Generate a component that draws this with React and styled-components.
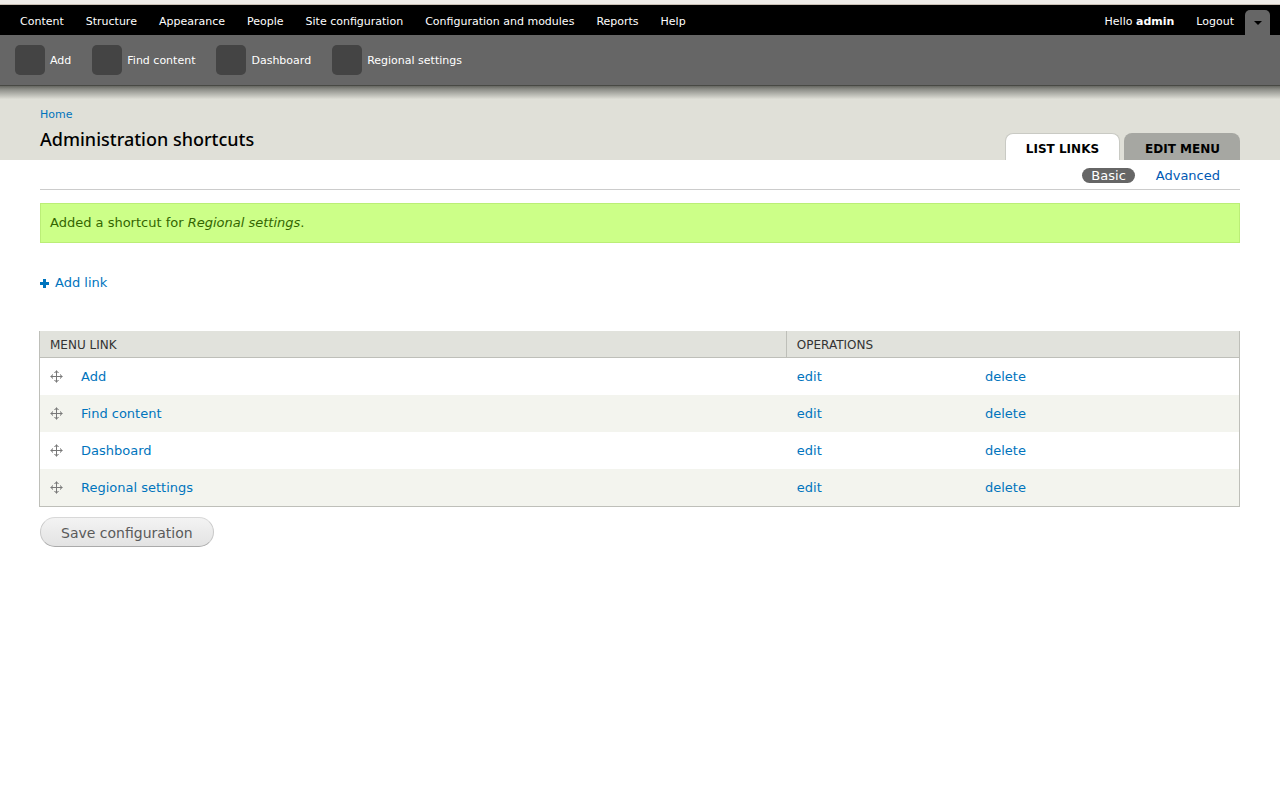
import { useState } from "react";
import styled, { createGlobalStyle } from "styled-components";

const menuItems = [
  "Content",
  "Structure",
  "Appearance",
  "People",
  "Site configuration",
  "Configuration and modules",
  "Reports",
  "Help",
];

const shortcuts = ["Add", "Find content", "Dashboard", "Regional settings"];

const App = () => {
  const [drawerOpen, setDrawerOpen] = useState(true);

  return (
    <>
      <GlobalStyle />
      <Toolbar>
        <MenuBar>
          <Menu>
            {menuItems.map((item) => (
              <MenuLink href="#" key={item}>{item}</MenuLink>
            ))}
          </Menu>
          <UserMenu>
            <MenuLink href="#">Hello <strong>admin</strong></MenuLink>
            <MenuLink href="#">Logout</MenuLink>
          </UserMenu>
          <Toggle
            type="button"
            aria-label="Toggle shortcuts"
            onClick={() => setDrawerOpen(!drawerOpen)}
          >
            <svg width="8" height="4" viewBox="0 0 8 4">
              <path d="M0 0h8L4 4z" fill="#000" />
            </svg>
          </Toggle>
        </MenuBar>
        {drawerOpen && (
          <Drawer>
            {shortcuts.map((name) => (
              <Shortcut href="#" key={name}>
                <ShortcutIcon />
                <ShortcutName>{name}</ShortcutName>
              </Shortcut>
            ))}
          </Drawer>
        )}
      </Toolbar>
      <Shadow />

      <Branding>
        <div>
          <Breadcrumb href="#">Home</Breadcrumb>
          <Title>Administration shortcuts</Title>
        </div>
        <Tabs>
          <Tab href="#" $active>List links</Tab>
          <Tab href="#">Edit menu</Tab>
        </Tabs>
      </Branding>

      <Page>
        <SubTabs>
          <SubTab href="#" $active>Basic</SubTab>
          <SubTab href="#">Advanced</SubTab>
        </SubTabs>

        <Message>
          Added a shortcut for <em>Regional settings</em>.
        </Message>

        <AddLink href="#">
          <svg width="9" height="9" viewBox="0 0 9 9">
            <path d="M3 0h3v3h3v3H6v3H3V6H0V3h3z" fill="#0074bd" />
          </svg>
          Add link
        </AddLink>

        <Table>
          <colgroup>
            <LinkCol />
            <EditCol />
            <col />
          </colgroup>
          <thead>
            <tr>
              <Th>Menu link</Th>
              <Th colSpan="2">Operations</Th>
            </tr>
          </thead>
          <tbody>
            {shortcuts.map((name) => (
              <Row key={name}>
                <Td>
                  <LinkCell>
                    <DragHandle />
                    <Link href="#">{name}</Link>
                  </LinkCell>
                </Td>
                <Td><Link href="#">edit</Link></Td>
                <Td><Link href="#">delete</Link></Td>
              </Row>
            ))}
          </tbody>
        </Table>

        <SaveButton type="button">Save configuration</SaveButton>
      </Page>
    </>
  );
};

const DragHandle = () => (
  <svg width="13" height="13" viewBox="0 0 13 13" fill="#787878">
    <path d="M6 1h1v11H6z" />
    <path d="M1 6h11v1H1z" />
    <path d="M6 0h1v1h1v1h1v1H4V2h1V1h1z" opacity="0.6" />
    <path d="M6 13h1v-1h1v-1h1v-1H4v1h1v1h1z" opacity="0.6" />
    <path d="M0 6v1h1v1h1v1h1V4H2v1H1v1z" opacity="0.6" />
    <path d="M13 6v1h-1v1h-1v1h-1V4h1v1h1v1z" opacity="0.6" />
  </svg>
);

export default App;

const GlobalStyle = createGlobalStyle`
  body {
    margin: 0;
    background: #fff;
    color: #000;
    font-family: "DejaVu Sans", Verdana, sans-serif;
    font-size: 13px;
    line-height: 20px;
  }

  a {
    text-decoration: none;
  }

  svg {
    flex: none;
    display: block;
  }
`;

const Toolbar = styled.header`
  border-top: 4px solid #eeebe7;
  font-size: 11px;
`;

const MenuBar = styled.div`
  display: flex;
  height: 30px;
  padding: 0 10px 0 9px;
  border-top: 1px solid #c9bfb4;
  background: #000;
`;

const Menu = styled.nav`
  display: flex;
  flex: 1;
`;

const UserMenu = styled.nav`
  display: flex;
`;

const MenuLink = styled.a`
  padding: 7px 11px 3px;
  color: #fff;
  white-space: nowrap;
`;

const Toggle = styled.button`
  display: flex;
  align-items: center;
  justify-content: center;
  align-self: flex-end;
  width: 25px;
  height: 25px;
  padding: 0;
  border: none;
  border-radius: 5px 5px 0 0;
  background: #666;
  cursor: pointer;
`;

const Drawer = styled.nav`
  display: flex;
  gap: 21px;
  padding: 10px 15px;
  background: #666;
`;

const Shortcut = styled.a`
  display: flex;
  align-items: center;
  gap: 5px;
  color: #fff;
`;

const ShortcutName = styled.span`
  padding-top: 2px;
`;

const ShortcutIcon = styled.span`
  width: 30px;
  height: 30px;
  border-radius: 5px;
  background: #444;
`;

const Shadow = styled.div`
  height: 13px;
  border-top: 1px solid #484944;
  background: linear-gradient(#666761, #8c8d87 25%, #d8d8d0 95%, #e0e0d8);
`;

const Branding = styled.div`
  display: flex;
  justify-content: space-between;
  align-items: flex-end;
  padding: 6px 40px 0;
  background: #e0e0d8;
`;

const Breadcrumb = styled.a`
  display: block;
  color: #0074bd;
  font-size: 11px;
`;

const Title = styled.h1`
  margin: 0;
  padding: 2px 0 9px;
  font-family: "Noto Sans", "DejaVu Sans", sans-serif;
  font-size: 18px;
  font-weight: 500;
  line-height: 24px;
`;

const Tabs = styled.nav`
  display: flex;
  gap: 4px;
`;

const Tab = styled.a`
  padding: ${(p) => (p.$active ? "5px 20px 1px" : "6px 20px 1px 21px")};
  border: solid #c9cac4;
  border-width: ${(p) => (p.$active ? "1px 1px 0" : "0")};
  border-radius: 8px 8px 0 0;
  background: ${(p) => (p.$active ? "#fff" : "#a6a7a2")};
  color: #000;
  font-size: 12px;
  font-weight: bold;
  text-transform: uppercase;
`;

const Page = styled.main`
  padding: 0 40px 40px;
`;

const SubTabs = styled.nav`
  display: flex;
  justify-content: flex-end;
  gap: 12px;
  padding: 8px 11px 6px 0;
  border-bottom: 1px solid #ccc;
`;

const SubTab = styled.a`
  padding: 0 9px;
  border-radius: 8px;
  background: ${(p) => (p.$active ? "#666" : "transparent")};
  color: ${(p) => (p.$active ? "#fff" : "#0059b3")};
  line-height: 15px;
`;

const Message = styled.div`
  margin: 13px 0 30px;
  padding: 9px;
  border: 1px solid #be7;
  background: #cf8;
  color: #360;
`;

const AddLink = styled.a`
  display: inline-flex;
  align-items: center;
  gap: 6px;
  margin-bottom: 38px;
  color: #0074bd;
`;

const Table = styled.table`
  width: calc(100% + 1px);
  margin: 0 0 10px -1px;
  border: 1px solid #bebfb9;
  border-top: none;
  border-spacing: 0;
  border-collapse: separate;
  table-layout: fixed;
`;

const LinkCol = styled.col`
  width: 62.2%;
`;

const EditCol = styled.col`
  width: 15.7%;
`;

const Th = styled.th`
  padding: 4px 10px 2px;
  border-bottom: 1px solid #bebfb9;
  background: #e1e2dc;
  color: #333;
  font-size: 12px;
  font-weight: normal;
  text-align: left;
  text-transform: uppercase;

  & + & {
    border-left: 1px solid #bebfb9;
  }
`;

const Row = styled.tr`
  &:nth-child(even) {
    background: #f3f4ee;
  }
`;

const Td = styled.td`
  height: 37px;
  padding: 0 10px;

  & + & {
    padding-left: 11px;
  }
`;

const LinkCell = styled.div`
  display: flex;
  align-items: center;
  gap: 18px;
`;

const Link = styled.a`
  color: #0074bd;
`;

const SaveButton = styled.button`
  display: block;
  padding: 5px 20px 3px;
  border: 1px solid #ccc;
  border-color: #d8d8d8 #c8c8c8 #aaa;
  border-radius: 15px;
  background: linear-gradient(#f3f3f3, #e3e3e3);
  color: #5a5a5a;
  font-family: inherit;
  font-size: 14px;
  line-height: 20px;
  cursor: pointer;
`;
